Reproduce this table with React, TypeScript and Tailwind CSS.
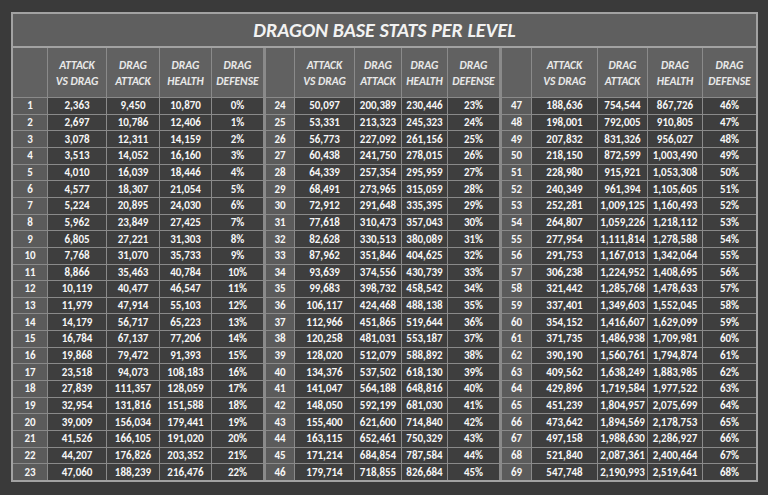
import React from 'react';

type Row = [string, string, string, string, string];

const parse = (s: string): Row[] =>
  s
    .trim()
    .split('\n')
    .map((l) => l.trim().split(/\s+/) as Row);

const group1 = parse(`
1 2,363 9,450 10,870 0%
2 2,697 10,786 12,406 1%
3 3,078 12,311 14,159 2%
4 3,513 14,052 16,160 3%
5 4,010 16,039 18,446 4%
6 4,577 18,307 21,054 5%
7 5,224 20,895 24,030 6%
8 5,962 23,849 27,425 7%
9 6,805 27,221 31,303 8%
10 7,768 31,070 35,733 9%
11 8,866 35,463 40,784 10%
12 10,119 40,477 46,547 11%
13 11,979 47,914 55,103 12%
14 14,179 56,717 65,223 13%
15 16,784 67,137 77,206 14%
16 19,868 79,472 91,393 15%
17 23,518 94,073 108,183 16%
18 27,839 111,357 128,059 17%
19 32,954 131,816 151,588 18%
20 39,009 156,034 179,441 19%
21 41,526 166,105 191,020 20%
22 44,207 176,826 203,352 21%
23 47,060 188,239 216,476 22%
`);

const group2 = parse(`
24 50,097 200,389 230,446 23%
25 53,331 213,323 245,323 24%
26 56,773 227,092 261,156 25%
27 60,438 241,750 278,015 26%
28 64,339 257,354 295,959 27%
29 68,491 273,965 315,059 28%
30 72,912 291,648 335,395 29%
31 77,618 310,473 357,043 30%
32 82,628 330,513 380,089 31%
33 87,962 351,846 404,625 32%
34 93,639 374,556 430,739 33%
35 99,683 398,732 458,542 34%
36 106,117 424,468 488,138 35%
37 112,966 451,865 519,644 36%
38 120,258 481,031 553,187 37%
39 128,020 512,079 588,892 38%
40 134,376 537,502 618,130 39%
41 141,047 564,188 648,816 40%
42 148,050 592,199 681,030 41%
43 155,400 621,600 714,840 42%
44 163,115 652,461 750,329 43%
45 171,214 684,854 787,584 44%
46 179,714 718,855 826,684 45%
`);

const group3 = parse(`
47 188,636 754,544 867,726 46%
48 198,001 792,005 910,805 47%
49 207,832 831,326 956,027 48%
50 218,150 872,599 1,003,490 49%
51 228,980 915,921 1,053,308 50%
52 240,349 961,394 1,105,605 51%
53 252,281 1,009,125 1,160,493 52%
54 264,807 1,059,226 1,218,112 53%
55 277,954 1,111,814 1,278,588 54%
56 291,753 1,167,013 1,342,064 55%
57 306,238 1,224,952 1,408,695 56%
58 321,442 1,285,768 1,478,633 57%
59 337,401 1,349,603 1,552,045 58%
60 354,152 1,416,607 1,629,099 59%
61 371,735 1,486,938 1,709,981 60%
62 390,190 1,560,761 1,794,874 61%
63 409,562 1,638,249 1,883,985 62%
64 429,896 1,719,584 1,977,522 63%
65 451,239 1,804,957 2,075,699 64%
66 473,642 1,894,569 2,178,753 65%
67 497,158 1,988,630 2,286,927 66%
68 521,840 2,087,361 2,400,464 67%
69 547,748 2,190,993 2,519,641 68%
`);

const headers: [string, string][] = [
  ['ATTACK', 'VS DRAG'],
  ['DRAG', 'ATTACK'],
  ['DRAG', 'HEALTH'],
  ['DRAG', 'DEFENSE'],
];

const StatGroup: React.FC<{ rows: Row[]; cols: string }> = ({ rows, cols }) => (
  <div className={`grid ${cols} grid-rows-[49px_repeat(23,minmax(0,1fr))] gap-px h-full`}>
    <div className="bg-[#616161]" />
    {headers.map(([a, b]) => (
      <div
        key={a + b}
        className="bg-[#616161] flex flex-col items-center justify-center text-[11.5px] leading-[16px] font-bold italic text-[#e8e8e8] whitespace-nowrap"
      >
        <span>{a}</span>
        <span>{b}</span>
      </div>
    ))}
    {rows.map((r) => (
      <React.Fragment key={r[0]}>
        <div className="bg-[#5b5b5b] flex items-center justify-center text-[11px] leading-none font-bold text-[#f6f6f6] overflow-hidden">
          {r[0]}
        </div>
        {r.slice(1).map((v, i) => (
          <div
            key={i}
            className="bg-[#3e3e3e] flex items-center justify-center text-[11px] leading-none font-bold text-[#f6f6f6] whitespace-nowrap overflow-hidden"
          >
            {v}
          </div>
        ))}
      </React.Fragment>
    ))}
  </div>
);

export default function App() {
  return (
    <div
      className="w-[768px] h-[495px] bg-[#3a3a3a] pt-[12px] pl-[11px]"
      style={{ fontFamily: 'Carlito, Lato, "Open Sans", sans-serif' }}
    >
      <div className="w-[747px] border-2 border-[#a2a2a2] bg-[#a2a2a2] flex flex-col">
        {/* Title */}
        <div className="h-[32px] bg-[#5f5f5f] flex items-center justify-center text-[20px] font-bold italic text-[#f2f2f2]">
          DRAGON BASE STATS PER LEVEL
        </div>
        <div className="h-[2px] bg-[#a2a2a2]" />
        {/* Three level groups */}
        <div className="h-[432px] flex gap-[3px] bg-[#8a8a8a]">
          <div className="w-[250px] h-full">
            <StatGroup rows={group1} cols="grid-cols-[34px_58px_52px_51px_51px]" />
          </div>
          <div className="w-[233px] h-full">
            <StatGroup rows={group2} cols="grid-cols-[28px_59px_46px_45px_51px]" />
          </div>
          <div className="w-[254px] h-full">
            <StatGroup rows={group3} cols="grid-cols-[29px_65px_49px_54px_53px]" />
          </div>
        </div>
      </div>
    </div>
  );
}
